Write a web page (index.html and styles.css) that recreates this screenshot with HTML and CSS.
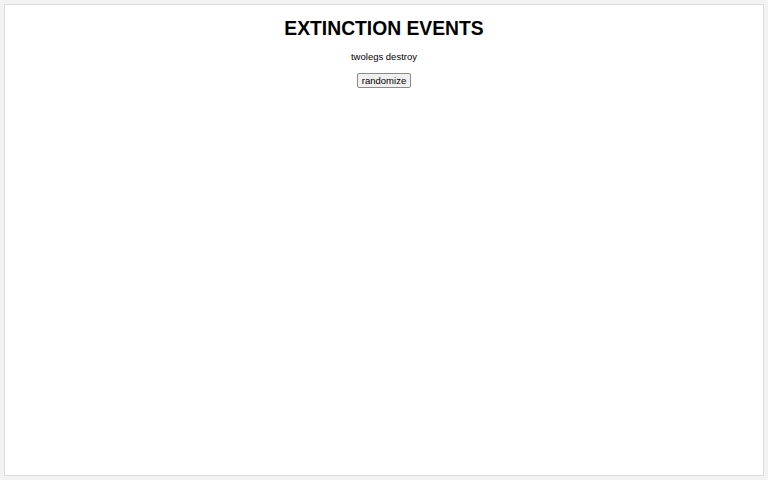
FILE: index.html
```html
<!DOCTYPE html>
<html lang="en">
<head>
    <meta charset="UTF-8">
    <meta name="viewport" content="width=device-width, initial-scale=1.0">
    <title>Extinction Events</title>
    <link rel="stylesheet" href="styles.css">
</head>
<body>

<div class="container">
    <h2 class="heading">EXTINCTION EVENTS</h2>
    <p class="event" id="event">twolegs destroy</p>
    <button class="randomize" id="randomize">randomize</button>
</div>

</body>
</html>
```

FILE: styles.css
```css
html, body {
    height: 100%;
}

body {
    font-family: "Liberation Sans", Arial, sans-serif;
    background-color: #f2f2f2;
    margin: 0;
    padding: 4px;
    box-sizing: border-box;
}

.container {
    height: 100%;
    box-sizing: border-box;
    background-color: white;
    border: 1px solid #dcdcdc;
    text-align: center;
    padding-top: 13px;
}

.heading {
    font-size: 19.3px;
    font-weight: bold;
    margin: 0;
    line-height: 22px;
}

.event {
    font-size: 9.5px;
    margin: 11px 0 7px;
    line-height: 12px;
}

.randomize {
    font-family: "Liberation Sans", Arial, sans-serif;
    font-size: 9.5px;
    line-height: 11px;
    padding: 1px 4px;
    background-color: #f0f0f0;
    border: 1px solid #8a8a8a;
    border-radius: 2px;
    color: black;
}
```
